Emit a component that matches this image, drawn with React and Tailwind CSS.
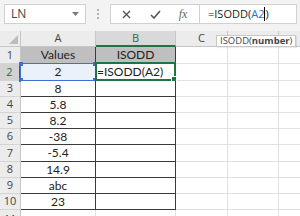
import React from "react";

const rows = [
  { n: 1, h: 17, a: "Values", b: "ISODD" },
  { n: 2, h: 17, a: "2" },
  { n: 3, h: 16, a: "8" },
  { n: 4, h: 16, a: "5.8" },
  { n: 5, h: 16, a: "8.2" },
  { n: 6, h: 16, a: "-38" },
  { n: 7, h: 17, a: "-5.4" },
  { n: 8, h: 16, a: "14.9" },
  { n: 9, h: 16, a: "abc" },
  { n: 10, h: 16, a: "23" },
  { n: 11, h: 16, a: "", last: true },
];

const ui = { fontFamily: '"Open Sans", "Noto Sans", sans-serif' };
const cellFont = { fontFamily: 'Lato, "Liberation Sans", sans-serif' };

function Row({ r }) {
  const sel = r.n === 2;
  const inTable = !r.last;
  const hClass = {
    16: "h-[16px]",
    17: "h-[17px]",
  }[r.h];
  return (
    <div className={`flex ${hClass}`}>
      <div
        className={`w-[21px] shrink-0 flex items-center justify-center text-[11px] border-b border-[#d4d4d4] ${
          sel
            ? "bg-[#d2d2d2] text-[#217346] border-r-2 border-r-[#217346]"
            : "bg-[#ececec] text-[#444] border-r border-r-[#c6c6c6]"
        } ${r.last ? "items-start pt-[1px]" : ""}`}
        style={ui}
      >
        {r.n}
      </div>
      <div
        className={`relative w-[75px] shrink-0 flex items-center justify-center text-[12px] text-[#222] ${
          inTable ? "border-r border-b border-[#3a3a3a]" : "border-r border-[#e1e1e1]"
        } ${r.n === 1 ? "bg-[#bfbfbf]" : sel ? "bg-[#eaf1fb]" : "bg-white"}`}
        style={cellFont}
      >
        {r.a}
        {sel && (
          <div className="absolute -left-px -top-px -right-px -bottom-px border border-[#3f6fd1] pointer-events-none">
            <span className="absolute -left-[2px] -top-[2px] w-[4px] h-[4px] bg-[#3f6fd1]" />
            <span className="absolute -right-[2px] -top-[2px] w-[4px] h-[4px] bg-[#3f6fd1]" />
            <span className="absolute -left-[2px] -bottom-[2px] w-[4px] h-[4px] bg-[#3f6fd1]" />
            <span className="absolute -right-[2px] -bottom-[2px] w-[4px] h-[4px] bg-[#3f6fd1]" />
          </div>
        )}
      </div>
      <div
        className={`relative w-[80px] shrink-0 flex items-center text-[12px] text-[#222] ${
          r.n === 1 ? "justify-center bg-[#bfbfbf]" : "bg-white"
        } ${inTable ? "border-r border-b border-[#3a3a3a]" : "border-r border-[#e1e1e1]"}`}
        style={cellFont}
      >
        {r.b}
        {sel && (
          <>
            <span className="pl-[1px] whitespace-nowrap">=ISODD(A2)</span>
            <div className="absolute -left-[1px] -top-[2px] -right-[1px] -bottom-[1px] border-2 border-[#217346] pointer-events-none">
              <span className="absolute -right-[3px] -bottom-[3px] w-[4px] h-[4px] bg-[#217346] border border-white box-content" />
            </div>
          </>
        )}
      </div>
      <div className={`w-[52px] shrink-0 border-r border-[#e1e1e1] ${r.last ? "" : "border-b"}`} />
      <div className={`w-[51px] shrink-0 border-r border-[#e1e1e1] ${r.last ? "" : "border-b"}`} />
      <div className={`flex-1 border-[#e1e1e1] ${r.last ? "" : "border-b"}`} />
    </div>
  );
}

export default function App() {
  return (
    <div className="w-[300px] h-[216px] overflow-hidden bg-white relative select-none">
      {/* Toolbar / formula bar */}
      <div className="h-[31px] bg-[#f3f3f3] flex items-start pt-[4px] pl-[4px] pr-[3px]" style={ui}>
        <div className="w-[82px] h-[20px] bg-white border border-[#d0d0d0] flex items-center pl-[6px] pr-[6px] text-[12px] text-[#444]">
          <span className="flex-1">LN</span>
          <svg width="7" height="4" viewBox="0 0 7 4">
            <path d="M0 0 L7 0 L3.5 4 Z" fill="#7a7a7a" />
          </svg>
        </div>
        <div className="w-[24px] h-[20px] flex flex-col items-center justify-center gap-[2px]">
          <span className="w-[2px] h-[2px] bg-[#b0b0b0]" />
          <span className="w-[2px] h-[2px] bg-[#b0b0b0]" />
          <span className="w-[2px] h-[2px] bg-[#b0b0b0]" />
        </div>
        <div className="flex-1 h-[20px] bg-white border border-[#d0d0d0] flex">
          <div className="w-[89px] flex items-center border-r border-[#d0d0d0]">
            <div className="w-[30px] flex justify-center">
              <svg width="9" height="9" viewBox="0 0 9 9">
                <path d="M1 1 L8 8 M8 1 L1 8" stroke="#555" strokeWidth="1.4" />
              </svg>
            </div>
            <div className="w-[28px] flex justify-center">
              <svg width="11" height="9" viewBox="0 0 11 9">
                <path d="M1 5 L4 8 L10 1" stroke="#555" strokeWidth="1.6" fill="none" />
              </svg>
            </div>
            <div
              className="w-[28px] flex justify-center text-[12px] italic text-[#666]"
              style={{ fontFamily: '"Liberation Serif", serif' }}
            >
              fx
            </div>
          </div>
          <div className="flex-1 flex items-center pl-[8px] text-[11px] text-[#222]">
            <span>=ISODD(</span>
            <span className="text-[#2f6fc4]">A2</span>
            <span className="w-px h-[14px] bg-black" />
            <span>)</span>
          </div>
        </div>
      </div>

      {/* Column headers */}
      <div className="flex h-[16px] bg-[#ececec] text-[11px] text-[#444]" style={ui}>
        <div className="w-[21px] shrink-0 border-r border-b border-[#c6c6c6] flex items-end justify-end pr-[2px] pb-[2px]">
          <svg width="9" height="9" viewBox="0 0 9 9">
            <path d="M9 0 L9 9 L0 9 Z" fill="#bcbcbc" />
          </svg>
        </div>
        <div className="w-[75px] shrink-0 border-r border-b border-[#c6c6c6] flex items-center justify-center">
          A
        </div>
        <div className="w-[80px] shrink-0 bg-[#d9d9d9] border-r border-r-[#c6c6c6] border-b-2 border-b-[#217346] text-[#217346] flex items-center justify-center">
          B
        </div>
        <div className="w-[52px] shrink-0 border-r border-b border-[#c6c6c6] flex items-center justify-center">
          C
        </div>
        <div className="w-[51px] shrink-0 border-r border-b border-[#c6c6c6]" />
        <div className="flex-1 border-b border-[#c6c6c6]" />
      </div>

      {rows.map((r) => (
        <Row key={r.n} r={r} />
      ))}

      {/* Function tooltip */}
      <div
        className="absolute left-[216px] top-[35px] h-[12px] px-[3px] bg-white border border-[#c8c8c8] flex items-center text-[9.5px] text-[#444] whitespace-nowrap shadow-[1px_1px_1px_rgba(0,0,0,0.08)]"
        style={ui}
      >
        ISODD(<b className="font-bold">number</b>)
      </div>
    </div>
  );
}
